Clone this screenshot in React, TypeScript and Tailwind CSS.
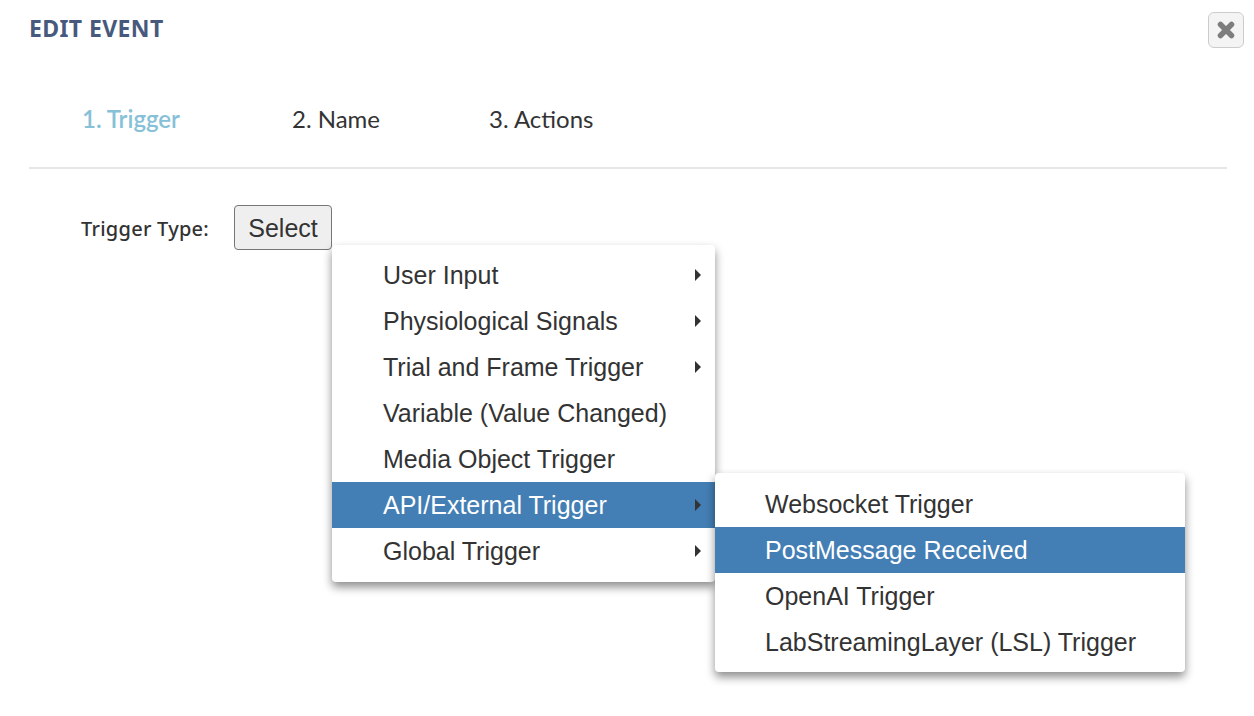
const mainItems = [
  { label: "User Input", sub: true },
  { label: "Physiological Signals", sub: true },
  { label: "Trial and Frame Trigger", sub: true },
  { label: "Variable (Value Changed)", sub: false },
  { label: "Media Object Trigger", sub: false },
  { label: "API/External Trigger", sub: true, active: true },
  { label: "Global Trigger", sub: true },
];

const subItems = [
  { label: "Websocket Trigger" },
  { label: "PostMessage Received", active: true },
  { label: "OpenAI Trigger" },
  { label: "LabStreamingLayer (LSL) Trigger" },
];

const Caret = () => (
  <svg width="6" height="12" viewBox="0 0 6 12" className="absolute right-[14px] top-[17px]">
    <path d="M0 0 L6 6 L0 12 Z" fill="#333333" />
  </svg>
);

const Row = ({ label, sub, active, inset }: { label: string; sub?: boolean; active?: boolean; inset: string }) => (
  <div
    className={`relative h-[46px] pr-[20px] leading-[46px] whitespace-nowrap ${inset} ${
      active ? "bg-[#437eb4] text-white" : "text-[#333333]"
    }`}
  >
    {label}
    {sub && <Caret />}
  </div>
);

export default function App() {
  return (
    <div className="relative h-[716px] w-[1254px] overflow-hidden bg-white pl-[29px] pr-[27px]">
      <div className="flex h-[58px] items-center justify-between">
        <h1 className="-mt-[2px] font-['Noto_Sans',sans-serif] text-[23px] font-bold tracking-[0.4px] text-[#47597c]">EDIT EVENT</h1>
        <button className="-mr-[17px] mt-[2px] flex h-[36px] w-[36px] items-center justify-center rounded-[6px] border border-[#cccccc] bg-[#f4f4f4]">
          <svg width="18" height="18" viewBox="0 0 18 18">
            <path d="M3.5 3.5 L14.5 14.5 M14.5 3.5 L3.5 14.5" stroke="#7d7d7d" strokeWidth="5.5" strokeLinecap="round" />
          </svg>
        </button>
      </div>

      <div className="flex h-[111px] items-center border-b-2 border-[#e6e6e6] pl-[53px] pt-[13px] font-['Lato',sans-serif] text-[24px] text-[#333333]">
        <span className="w-[210px] font-semibold tracking-[0px] text-[#87c1d8]">1. Trigger</span>
        <span className="w-[197px]">2. Name</span>
        <span>3. Actions</span>
      </div>

      <div className="mt-[36px] flex items-center pl-[52px]">
        <span className="mt-[2px] w-[153px] font-['Noto_Sans',sans-serif] text-[20px] font-medium tracking-[0.25px] text-[#333333]">Trigger Type:</span>
        <button className="h-[45px] w-[98px] rounded-[4px] border border-[#767676] bg-[#efefef] pt-[2px] font-['Liberation_Sans',sans-serif] text-[25px] text-[#333333]">
          Select
        </button>
      </div>

      <div className="absolute left-[332px] top-[245px] w-[383px] rounded-[4px] bg-white pb-[8px] pt-[7px] font-['Liberation_Sans',sans-serif] text-[25px] shadow-[0_5px_10px_rgba(0,0,0,0.45)]">
        {mainItems.map((item) => (
          <Row key={item.label} inset="pl-[51px]" {...item} />
        ))}
      </div>

      <div className="absolute left-[715px] top-[473px] w-[470px] rounded-[4px] bg-white pb-[7px] pt-[8px] font-['Liberation_Sans',sans-serif] text-[25px] shadow-[0_5px_10px_rgba(0,0,0,0.45)]">
        {subItems.map((item) => (
          <Row key={item.label} inset="pl-[50px]" {...item} />
        ))}
      </div>
    </div>
  );
}
